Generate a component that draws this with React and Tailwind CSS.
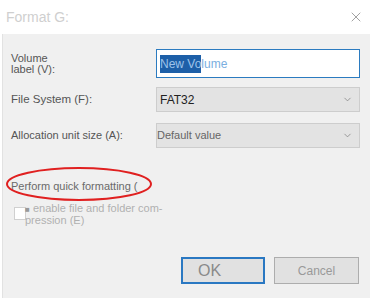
import { ChevronDown, X } from 'lucide-react';

export default function App() {
  return (
    <div className="w-[376px] h-[298px] bg-white overflow-hidden font-['Liberation_Sans',Arial,sans-serif] relative">
      <div className="h-[34px] flex items-center justify-between pl-[6px] pr-[12px]">
        <span className="text-[14px] text-[#cfcfcf]">Format G:</span>
        <X className="w-[16px] h-[16px] text-[#8a8a8a]" strokeWidth={1.2} />
      </div>
      <div className="ml-[2px] mr-[6px] h-[264px] bg-[#f0f0f0] border-l border-[#e2e2e2] relative">
        <div className="pt-[15px] pl-[8px]">
          <div className="flex items-center h-[29px]">
            <div className="w-[145px] text-[11px] leading-[11px] text-[#555]">
              Volume
              <br />
              label (V):
            </div>
            <div className="w-[204px] h-[29px] bg-white border border-[#2b7bc0] flex items-center pl-[3px] text-[12px]">
              <span className="bg-[#1d5fa8] text-[#9ec3ea]">New Vo</span>
              <span className="text-[#7aaee0]">lume</span>
            </div>
          </div>
          <div className="flex items-center h-[25px] mt-[9px]">
            <div className="w-[145px] text-[11.5px] text-[#555]">File System (F):</div>
            <div className="w-[204px] h-[25px] bg-[#e3e3e3] border border-[#cdcdcd] flex items-center justify-between pl-[3px] pr-[6px]">
              <span className="text-[12px] text-[#222] font-medium">FAT32</span>
              <ChevronDown className="w-[11px] h-[11px] text-[#777]" strokeWidth={1.5} />
            </div>
          </div>
          <div className="flex items-center h-[25px] mt-[11px]">
            <div className="w-[145px] text-[11px] text-[#555]">Allocation unit size (A):</div>
            <div className="w-[204px] h-[25px] bg-[#e3e3e3] border border-[#cdcdcd] flex items-center justify-between pl-[0px] pr-[6px]">
              <span className="text-[11px] text-[#666]">Default value</span>
              <ChevronDown className="w-[11px] h-[11px] text-[#777]" strokeWidth={1.5} />
            </div>
          </div>
          <div className="mt-[31px] pl-[0px] text-[11px] text-[#6a6a6a] h-[14px] leading-[14px]">
            Perform quick formatting (
          </div>
          <div className="mt-[10px] flex items-start">
            <div className="w-[12px] h-[13px] border border-[#d0d0d0] bg-white mt-[4px] ml-[3px]" />
            <div className="text-[11px] leading-[11px] text-[#b0b0b0] -ml-[1px]">
              <span className="text-[8px] text-[#999]">■</span> enable file and folder com-
              <br />
              pression (E)
            </div>
          </div>
        </div>
        <div className="absolute left-[178px] top-[223px] flex gap-[9px]">
          <div className="w-[84px] h-[27px] bg-[#e1e1e1] border-2 border-[#2a78c2] flex items-center pl-[15px] text-[16px] text-[#8a8a8a]">
            OK
          </div>
          <div className="w-[85px] h-[27px] bg-[#e1e1e1] border border-[#adadad] flex items-center justify-center text-[12px] text-[#999]">
            Cancel
          </div>
        </div>
        <svg className="absolute left-[1px] top-[131px]" width="152" height="38" viewBox="0 0 152 38">
          <ellipse cx="75" cy="19" rx="72" ry="16" fill="none" stroke="#e02020" strokeWidth="2" />
        </svg>
      </div>
    </div>
  );
}
